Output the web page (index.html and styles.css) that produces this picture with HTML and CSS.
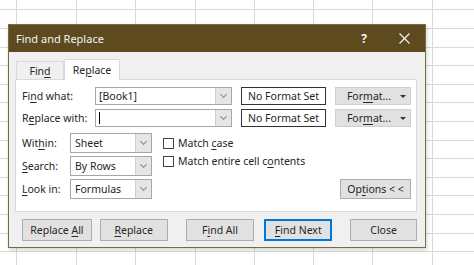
FILE: index.html
```html
<!DOCTYPE html>
<html lang="en">

<head>
    <meta charset="UTF-8">
    <meta name="viewport" content="width=device-width, initial-scale=1.0">
    <title>Find and Replace</title>
    <link rel="stylesheet" href="styles.css">
</head>

<body>
    <!-- worksheet grid behind the dialog -->
    <svg class="sheet" width="474" height="265" viewBox="0 0 474 265">
        <path d="M16.5 0V265M76.5 0V265M135.5 0V265M195.5 0V265M254.5 0V265M313.5 0V265M372.5 0V265M432.5 0V265
                 M0 9.5H474M0 28.5H474M0 47.5H474M0 65.5H474M0 84.5H474M0 102.5H474M0 121.5H474M0 140.5H474
                 M0 158.5H474M0 177.5H474M0 195.5H474M0 214.5H474M0 233.5H474M0 251.5H474"
              stroke="#d9d9d9" stroke-width="1" fill="none" />
    </svg>

    <div class="dialog">
        <div class="titlebar">
            <span class="title">Find and Replace</span>
            <span class="help">?</span>
            <svg class="close-x" width="11" height="11" viewBox="0 0 11 11">
                <path d="M0.5 0.5L10.5 10.5M10.5 0.5L0.5 10.5" stroke="#f2f2f2" stroke-width="1.2" />
            </svg>
        </div>

        <div class="body">
            <div class="tabs">
                <div class="tab"><span>Fin<u>d</u></span></div>
                <div class="tab active"><span>Re<u>p</u>lace</span></div>
            </div>

            <div class="panel">
                <div class="row">
                    <span class="label">Fi<u>n</u>d what:</span>
                    <div class="combo">
                        <span class="combo-text">[Book1]</span>
                        <span class="drop"><span class="chev"></span></span>
                    </div>
                    <div class="fmt-box">No Format Set</div>
                    <div class="fmt-btn"><span>For<u>m</u>at...</span><span class="tri"></span></div>
                </div>
                <div class="row">
                    <span class="label">R<u>e</u>place with:</span>
                    <div class="combo">
                        <span class="combo-text"><span class="caret"></span></span>
                        <span class="drop"><span class="chev"></span></span>
                    </div>
                    <div class="fmt-box">No Format Set</div>
                    <div class="fmt-btn"><span>For<u>m</u>at...</span><span class="tri"></span></div>
                </div>

                <div class="lower">
                    <div class="selects">
                        <div class="sel-row">
                            <span class="sel-label">Wit<u>h</u>in:</span>
                            <div class="select"><span class="select-text">Sheet</span><span class="drop"><span class="chev"></span></span></div>
                        </div>
                        <div class="sel-row">
                            <span class="sel-label"><u>S</u>earch:</span>
                            <div class="select"><span class="select-text">By Rows</span><span class="drop"><span class="chev"></span></span></div>
                        </div>
                        <div class="sel-row">
                            <span class="sel-label"><u>L</u>ook in:</span>
                            <div class="select"><span class="select-text">Formulas</span><span class="drop"><span class="chev"></span></span></div>
                        </div>
                    </div>
                    <div class="checks">
                        <div class="check"><span class="box"></span><span>Match <u>c</u>ase</span></div>
                        <div class="check"><span class="box"></span><span>Match entire cell c<u>o</u>ntents</span></div>
                    </div>
                    <div class="opt-wrap">
                        <div class="btn opt-btn"><span>Op<u>t</u>ions &lt; &lt;</span></div>
                    </div>
                </div>
            </div>

            <div class="buttons">
                <div class="btn b-all"><span>Replace <u>A</u>ll</span></div>
                <div class="btn b-rep"><span><u>R</u>eplace</span></div>
                <div class="btn b-fall"><span>F<u>i</u>nd All</span></div>
                <div class="btn b-next focus"><span><u>F</u>ind Next</span></div>
                <div class="btn b-close"><span>Close</span></div>
            </div>
        </div>
    </div>
</body>

</html>
```

FILE: styles.css
```css
body {
    margin: 0;
    width: 474px;
    height: 265px;
    background: #ffffff;
    font-family: "Noto Sans", "Open Sans", sans-serif;
    font-size: 10.5px;
    color: #262626;
    overflow: hidden;
    position: relative;
}

u {
    text-decoration-thickness: 1px;
    text-underline-offset: 2px;
}

.sheet {
    position: absolute;
    left: 0;
    top: 0;
}

.dialog {
    position: absolute;
    left: 8px;
    top: 24px;
    width: 418px;
    height: 224px;
    box-sizing: border-box;
    border: 1px solid #7a6a40;
    background: #f0f0f0;
    box-shadow: 1px 2px 4px rgba(0, 0, 0, 0.18);
    display: flex;
    flex-direction: column;
}

.titlebar {
    height: 27px;
    background: #5d4b1f;
    color: #f4f4f4;
    display: flex;
    align-items: center;
    padding-left: 7px;
    font-size: 11px;
}

.title {
    flex: 1;
}

.help {
    font-weight: bold;
    font-size: 12px;
    margin-right: 32px;
}

.close-x {
    margin-right: 15px;
}

.body {
    flex: 1;
    padding: 7px 8px 0 6px;
}

/* tabs */
.tabs {
    display: flex;
    align-items: flex-end;
    height: 20px;
    padding-left: 1px;
}

.tab {
    height: 18px;
    box-sizing: border-box;
    border: 1px solid #d9d9d9;
    border-bottom: none;
    display: flex;
    align-items: center;
    justify-content: center;
    width: 48px;
}

.tab.active {
    height: 21px;
    width: 56px;
    background: #ffffff;
    margin-bottom: -1px;
    position: relative;
    z-index: 1;
}

.panel {
    height: 133px;
    box-sizing: border-box;
    background: #ffffff;
    border: 1px solid #d9d9d9;
    padding: 7px 5px 0 6px;
}

.row {
    display: flex;
    align-items: center;
    height: 18px;
    margin-bottom: 4px;
}

.label {
    width: 73px;
}

.combo {
    width: 137px;
    height: 18px;
    box-sizing: border-box;
    border: 1px solid #a6a6a6;
    display: flex;
}

.combo-text {
    flex: 1;
    padding-left: 3px;
    display: flex;
    align-items: center;
}

.caret {
    width: 1px;
    height: 12px;
    background: #000000;
}

.drop {
    width: 15px;
    background: #e6e6e6;
    border-left: 1px solid #d0d0d0;
    display: flex;
    align-items: center;
    justify-content: center;
}

.chev {
    width: 4px;
    height: 4px;
    border-right: 1px solid #8a8a8a;
    border-bottom: 1px solid #8a8a8a;
    transform: rotate(45deg);
    margin-top: -3px;
}

.fmt-box {
    margin-left: 9px;
    width: 85px;
    height: 18px;
    box-sizing: border-box;
    border: 1px solid #333333;
    display: flex;
    align-items: center;
    justify-content: center;
}

.fmt-btn {
    margin-left: 9px;
    width: 76px;
    height: 18px;
    box-sizing: border-box;
    background: #e1e1e1;
    border: 1px solid #cfcfcf;
    display: flex;
    align-items: center;
    justify-content: flex-end;
    padding-right: 4px;
}

.tri {
    margin-left: 9px;
    border-left: 3px solid transparent;
    border-right: 3px solid transparent;
    border-top: 3px solid #333333;
}

.lower {
    display: flex;
    margin-top: 6px;
}

.selects {
    width: 141px;
}

.sel-row {
    display: flex;
    align-items: center;
    height: 20px;
    margin-bottom: 3px;
}

.sel-label {
    width: 48px;
}

.select {
    width: 82px;
    height: 20px;
    box-sizing: border-box;
    border: 1px solid #a6a6a6;
    display: flex;
}

.select-text {
    flex: 1;
    padding-left: 4px;
    display: flex;
    align-items: center;
}

.checks {
    padding-top: 1px;
    width: 176px;
}

.check {
    display: flex;
    align-items: center;
    height: 18px;
}

.box {
    width: 11px;
    height: 11px;
    box-sizing: border-box;
    border: 1px solid #444444;
    background: #ffffff;
    margin-right: 4px;
}

.opt-wrap {
    flex: 1;
    display: flex;
    align-items: flex-end;
    justify-content: flex-end;
    padding-bottom: 3px;
}

.btn {
    box-sizing: border-box;
    background: #e1e1e1;
    border: 1px solid #adadad;
    display: flex;
    align-items: center;
    justify-content: center;
}

.opt-btn {
    width: 71px;
    height: 20px;
}

/* bottom buttons */
.buttons {
    display: flex;
    margin-top: 7px;
    padding-left: 7px;
}

.buttons .btn {
    height: 22px;
}

.b-all {
    width: 70px;
}

.b-rep {
    width: 68px;
    margin-left: 8px;
}

.b-fall {
    width: 69px;
    margin-left: 18px;
}

.b-next {
    width: 68px;
    margin-left: 10px;
}

.b-close {
    width: 67px;
    margin-left: 18px;
}

.btn.focus {
    border: 2px solid #0078d7;
}
```
